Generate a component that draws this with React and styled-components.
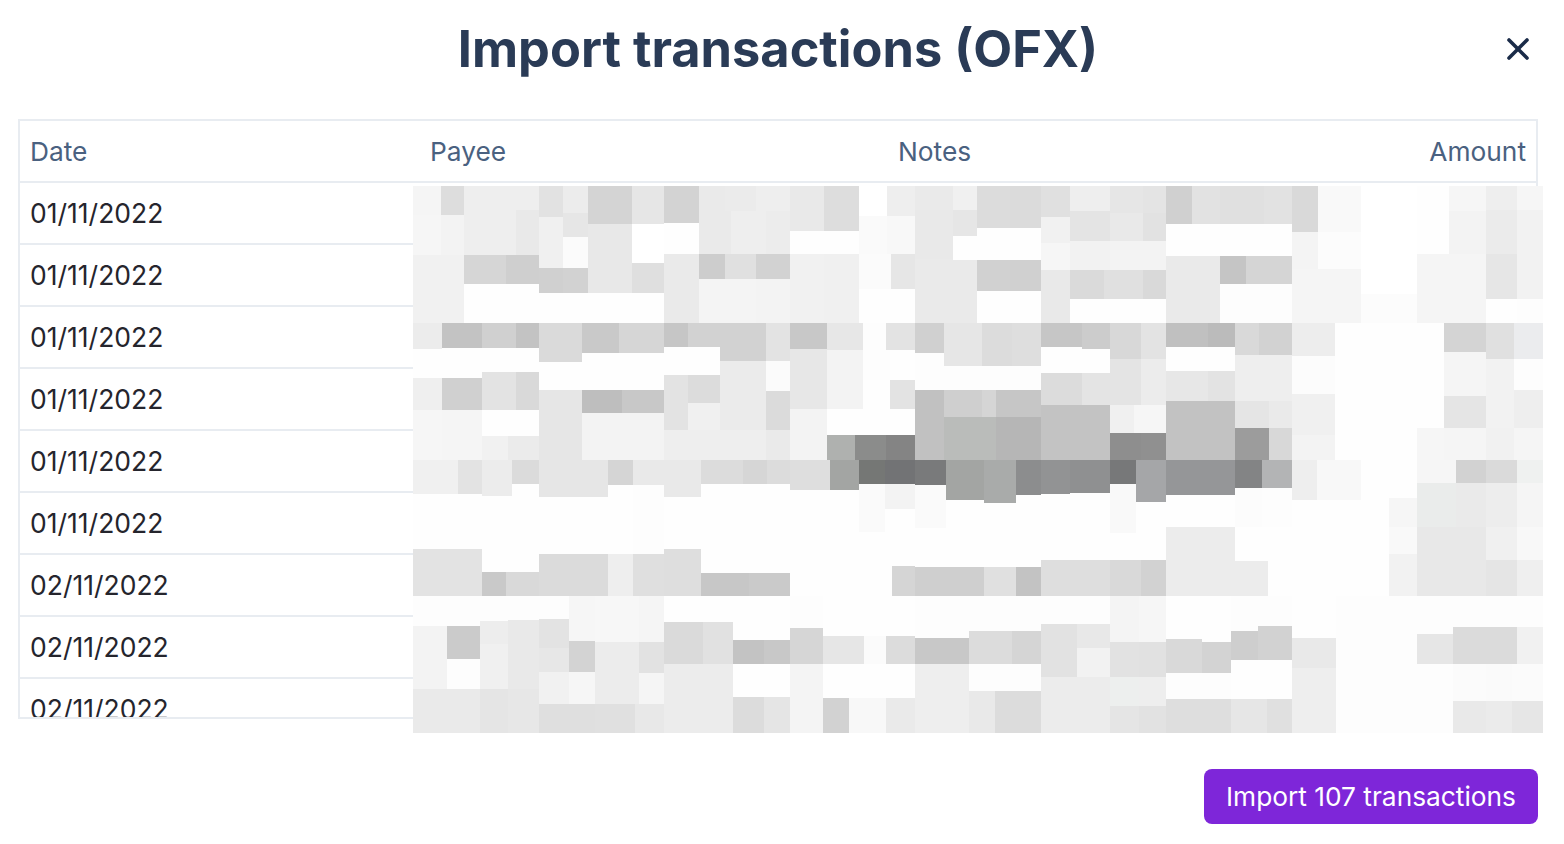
import React from 'react'
import styled, { createGlobalStyle } from 'styled-components'
import { X } from 'lucide-react'

const GlobalStyle = createGlobalStyle`
  html, body {
    margin: 0;
    background: #fff;
    font-family: Inter, "Noto Sans", sans-serif;
  }
`

const dates = [
  '01/11/2022', '01/11/2022', '01/11/2022', '01/11/2022', '01/11/2022',
  '01/11/2022', '02/11/2022', '02/11/2022', '02/11/2022',
]

// pixelated patch over payee, notes and amount: [right edge, [[bottom, grey], ...]]
const bands = [
  { base: 180, start: 18, columns: [
    [441, [[104, 'f5'], [225, 'f6'], [429, 'f1']]],
    [464, [[104, 'dd'], [225, 'f3'], [429, 'f1']]],
    [506, [[225, 'ee'], [312, 'd6'], [429, 'fe']]],
    [516, [[225, 'ee'], [312, 'cf'], [429, 'fe']]],
    [539, [[90, 'ee'], [225, 'e9'], [312, 'cf'], [429, 'fe']]],
    [563, [[110, 'e2'], [264, 'f0'], [339, 'd0'], [429, 'fe']]],
    [588, [[98, 'ec'], [170, 'e6'], [264, 'fb'], [339, 'd2'], [429, 'fe']]],
    [632, [[132, 'd4'], [339, 'e8'], [429, 'fe']]],
    [664, [[132, 'e6'], [249, 'ff'], [339, 'df'], [429, 'fe']]],
    [699, [[129, 'd3'], [222, 'fe'], [429, 'ea']]],
    [725, [[222, 'ea'], [297, 'cd'], [429, 'f4']]],
    [731, [[93, 'eb'], [222, 'ea'], [297, 'e0'], [429, 'f4']]],
    [756, [[93, 'eb'], [222, 'ee'], [297, 'e0'], [429, 'f4']]],
    [766, [[222, 'ee'], [297, 'd2'], [429, 'f3']]],
    [790, [[93, 'ee'], [222, 'ec'], [297, 'd2'], [429, 'f3']]],
    [824, [[153, 'e9'], [222, 'fe'], [429, 'f1']]],
    [859, [[153, 'dd'], [222, 'fe'], [429, 'f0']]],
    [887, [[108, 'ff'], [222, 'fa'], [327, 'fb'], [429, 'fe']]],
    [891, [[108, 'ee'], [222, 'f8'], [327, 'fb'], [429, 'fe']]],
    [915, [[108, 'ee'], [222, 'f8'], [327, 'e6'], [429, 'fe']]],
    [953, [[90, 'ea'], [237, 'e9'], [429, 'ea']]],
    [977, [[90, 'f0'], [168, 'e6'], [240, 'fe'], [429, 'ea']]],
    [1010, [[144, 'dc'], [240, 'fe'], [333, 'd1'], [429, 'fe']]],
    [1041, [[144, 'db'], [240, 'fe'], [333, 'd0'], [429, 'fe']]],
    [1070, [[111, 'e0'], [189, 'f1'], [270, 'f6'], [429, 'e9']]],
    [1104, [[93, 'ee'], [183, 'e4'], [270, 'f2'], [357, 'da'], [429, 'fe']]],
    [1110, [[93, 'ee'], [183, 'e4'], [270, 'f2'], [357, 'e0'], [429, 'fe']]],
    [1143, [[99, 'e6'], [183, 'e9'], [270, 'f3'], [357, 'e0'], [429, 'fe']]],
    [1166, [[99, 'e4'], [183, 'e2'], [270, 'f3'], [357, 'd9'], [429, 'fe']]],
    [1192, [[132, 'd0'], [228, 'fe'], [429, 'ea']]],
    [1220, [[132, 'e2'], [228, 'fe'], [429, 'ea']]],
    [1246, [[132, 'e0'], [228, 'fe'], [312, 'c5'], [429, 'fd']]],
    [1264, [[132, 'e0'], [228, 'fe'], [312, 'd5'], [429, 'fd']]],
    [1292, [[132, 'e2'], [228, 'fe'], [312, 'd5'], [429, 'fd']]],
    [1318, [[156, 'd9'], [267, 'f4'], [429, 'f5']]],
    [1361, [[156, 'f9'], [267, 'fc'], [429, 'f5']]],
    [1417, [[342, 'ff'], [429, 'fc']]],
    [1449, [[222, 'fe'], [429, 'f5']]],
    [1486, [[93, 'f6'], [222, 'f3'], [429, 'f5']]],
    [1517, [[90, 'ee'], [222, 'eb'], [357, 'e6'], [429, 'fe']]],
    [1543, [[90, 'f6'], [357, 'f2'], [429, 'fd']]],
  ] },
  { base: 180, start: 429, columns: [
    [442, [[507, 'ec'], [594, 'fe'], [690, 'ef'], [840, 'f6']]],
    [482, [[504, 'c3'], [594, 'fe'], [690, 'd0'], [840, 'f5']]],
    [508, [[504, 'd0'], [576, 'fe'], [690, 'e3'], [768, 'fe'], [840, 'f1']]],
    [516, [[504, 'd0'], [576, 'fe'], [690, 'e3'], [768, 'fe'], [840, 'eb']]],
    [539, [[504, 'c3'], [576, 'fe'], [690, 'd9'], [768, 'fe'], [840, 'eb']]],
    [582, [[546, 'da'], [630, 'fe'], [840, 'e6']]],
    [619, [[519, 'c9'], [630, 'fe'], [699, 'be'], [840, 'f3']]],
    [622, [[519, 'd6'], [630, 'fe'], [699, 'be'], [840, 'f3']]],
    [664, [[519, 'd6'], [630, 'fe'], [699, 'c8'], [840, 'f3']]],
    [688, [[501, 'c6'], [585, 'fe'], [750, 'e3'], [840, 'ee']]],
    [720, [[501, 'd2'], [585, 'fe'], [669, 'dc'], [750, 'f0'], [840, 'ee']]],
    [766, [[543, 'd2'], [750, 'eb'], [840, 'ee']]],
    [790, [[543, 'e3'], [633, 'fb'], [750, 'db'], [840, 'ea']]],
    [827, [[507, 'c8'], [687, 'e7'], [840, 'f3']]],
    [855, [[510, 'e7'], [687, 'f3'], [765, 'fe'], [840, 'afb1af']]],
    [863, [[510, 'e7'], [687, 'f3'], [765, 'fe'], [840, '8b8c8b']]],
    [886, [[600, 'fd'], [765, 'fe'], [840, '8b8c8b']]],
    [890, [[510, 'e3'], [600, 'fd'], [765, 'fe'], [840, '84']]],
    [915, [[510, 'e3'], [600, 'fe'], [687, 'e3'], [765, 'fe'], [840, '84']]],
    [944, [[519, 'd0'], [630, 'fd'], [840, 'c1']]],
    [982, [[558, 'e6'], [630, 'fd'], [711, 'cf'], [840, 'babcba']]],
    [996, [[558, 'dc'], [630, 'fd'], [711, 'd5'], [840, 'babcba']]],
    [1012, [[558, 'dc'], [630, 'fd'], [711, 'c6'], [840, 'b6']]],
    [1041, [[558, 'de'], [630, 'fd'], [711, 'c6'], [840, 'b6']]],
    [1082, [[501, 'c6'], [579, 'fe'], [675, 'dc'], [840, 'c3']]],
    [1110, [[507, 'cc'], [579, 'fe'], [675, 'e4'], [840, 'c3']]],
    [1134, [[537, 'd8'], [675, 'e4'], [759, 'f0'], [840, '8e']]],
    [1141, [[537, 'd8'], [675, 'e4'], [759, 'f6'], [840, '8e']]],
    [1166, [[537, 'e3'], [675, 'ec'], [759, 'f6'], [840, '90']]],
    [1208, [[501, 'c0'], [573, 'fe'], [663, 'e7'], [840, 'c2']]],
    [1235, [[501, 'bb'], [573, 'fe'], [663, 'e3'], [840, 'c2']]],
    [1259, [[525, 'd9'], [663, 'ee'], [744, 'e5'], [840, '9c']]],
    [1269, [[525, 'd2'], [663, 'ee'], [744, 'e5'], [840, '9c']]],
    [1292, [[525, 'd2'], [663, 'ee'], [744, 'ea'], [840, 'd8']]],
    [1335, [[528, 'ed'], [642, 'fc'], [765, 'f0'], [840, 'f3']]],
    [1417, [[840, 'fe']]],
    [1444, [[744, 'fe'], [840, 'f6']]],
    [1486, [[516, 'd4'], [648, 'f5'], [744, 'e5'], [840, 'f5']]],
    [1514, [[537, 'e0'], [744, 'f2'], [840, 'f1']]],
    [1543, [[537, 'ebecee'], [630, 'fd'], [744, 'ee'], [840, 'f5']]],
  ] },
  { base: 460, start: 0, columns: [
    [458, [[102, 'f0'], [267, 'fe'], [408, 'e3']]],
    [482, [[102, 'e3'], [267, 'fe'], [408, 'e3']]],
    [506, [[108, 'ec'], [336, 'fe'], [408, 'c9']]],
    [512, [[108, 'ec'], [336, 'fe'], [408, 'd9']]],
    [539, [[72, 'db'], [336, 'fe'], [408, 'd9']]],
    [608, [[111, 'e6'], [282, 'fe'], [408, 'db']]],
    [633, [[75, 'd5'], [282, 'fe'], [408, 'ee']]],
    [664, [[75, 'e9'], [282, 'fd'], [408, 'df']]],
    [701, [[111, 'e9'], [267, 'fe'], [408, 'de']]],
    [743, [[72, 'dc'], [339, 'fe'], [408, 'c7']]],
    [749, [[72, 'd6'], [339, 'fe'], [408, 'c7']]],
    [767, [[72, 'd6'], [339, 'fe'], [408, 'ca']]],
    [790, [[72, 'dc'], [339, 'fe'], [408, 'ca']]],
    [830, [[90, 'de'], [408, 'fe']]],
    [859, [[90, 'a3a5a3'], [408, 'fe']]],
    [885, [[72, '757775'], [216, 'fa'], [408, 'fe']]],
    [892, [[72, '727375'], [147, 'f3'], [408, 'fe']]],
    [915, [[72, '727375'], [147, 'f3'], [318, 'fe'], [408, 'd5']]],
    [946, [[75, '797a7b'], [204, 'fa'], [321, 'fe'], [408, 'cf']]],
    [984, [[120, 'a3a5a3'], [321, 'fe'], [408, 'cf']]],
    [1016, [[129, 'a9abaa'], [321, 'fe'], [408, 'e0']]],
    [1041, [[105, '8c8d8e'], [321, 'fe'], [408, 'c3']]],
    [1070, [[102, '929394'], [300, 'fe'], [408, 'de']]],
    [1110, [[99, '8f9091'], [300, 'fe'], [408, 'de']]],
    [1136, [[72, '777879'], [219, 'f9'], [300, 'fe'], [408, 'd9']]],
    [1141, [[126, 'a5a6a8'], [300, 'fe'], [408, 'd9']]],
    [1166, [[126, 'a5a6a8'], [300, 'fe'], [408, 'd2']]],
    [1235, [[105, '959698'], [201, 'fe'], [408, 'ec']]],
    [1262, [[84, '838485'], [201, 'fc'], [303, 'fe'], [408, 'ec']]],
    [1268, [[84, 'b3b4b5'], [201, 'fd'], [303, 'fe'], [408, 'ec']]],
    [1292, [[84, 'b3b4b5'], [201, 'fd'], [408, 'fe']]],
    [1317, [[120, 'ee'], [408, 'fe']]],
    [1361, [[120, 'f8'], [408, 'fe']]],
    [1389, [[408, 'fe']]],
    [1417, [[114, 'fe'], [201, 'f6'], [282, 'f9'], [408, 'f2']]],
    [1456, [[69, 'f6'], [201, 'eaeceb'], [408, 'e8']]],
    [1486, [[69, 'd2'], [201, 'ea'], [408, 'e8']]],
    [1517, [[69, 'da'], [201, 'ed'], [300, 'f0'], [408, 'e5']]],
    [1543, [[69, 'eff1f0'], [201, 'f5'], [300, 'f8'], [408, 'ef']]],
  ] },
  { base: 460, start: 408, columns: [
    [447, [[498, 'fd'], [687, 'f3'], [819, 'ea']]],
    [480, [[498, 'fd'], [597, 'cb'], [687, 'fd'], [819, 'ea']]],
    [508, [[483, 'fd'], [552, 'ed'], [687, 'f0'], [819, 'e5']]],
    [539, [[480, 'fd'], [687, 'e9'], [819, 'e7']]],
    [569, [[477, 'fd'], [564, 'e3'], [636, 'e7'], [732, 'f1'], [819, 'df']]],
    [595, [[543, 'f6'], [636, 'd3'], [732, 'f6'], [819, 'df']]],
    [635, [[546, 'f7'], [732, 'ec'], [819, 'e0']]],
    [639, [[546, 'f7'], [732, 'ec'], [819, 'e8']]],
    [664, [[546, 'f5'], [639, 'e2'], [732, 'f5'], [819, 'e8']]],
    [703, [[486, 'fe'], [612, 'da'], [819, 'ec']]],
    [733, [[486, 'fe'], [612, 'e1'], [819, 'ec']]],
    [764, [[540, 'fe'], [612, 'c3'], [711, 'fe'], [819, 'dc']]],
    [790, [[540, 'fe'], [612, 'c8'], [711, 'fe'], [819, 'e5']]],
    [823, [[504, 'fd'], [612, 'd6'], [819, 'f4']]],
    [849, [[528, 'fe'], [612, 'e6'], [714, 'fe'], [819, 'd2']]],
    [864, [[528, 'fe'], [612, 'e6'], [714, 'fe'], [819, 'f8']]],
    [886, [[528, 'fe'], [612, 'fb'], [714, 'fe'], [819, 'f8']]],
    [915, [[528, 'fe'], [612, 'dc'], [714, 'fe'], [819, 'ea']]],
    [969, [[534, 'fd'], [612, 'c8'], [819, 'ee']]],
    [995, [[513, 'fd'], [612, 'dc'], [693, 'fd'], [819, 'e9']]],
    [1012, [[513, 'fd'], [612, 'dc'], [693, 'fd'], [819, 'dc']]],
    [1041, [[513, 'fd'], [612, 'd5'], [693, 'fd'], [819, 'dc']]],
    [1077, [[492, 'fd'], [651, 'e2'], [819, 'ec']]],
    [1110, [[492, 'fd'], [564, 'e8'], [651, 'f2'], [819, 'ec']]],
    [1139, [[546, 'f4'], [651, 'e2'], [738, 'edefee'], [819, 'e5']]],
    [1166, [[546, 'f6'], [651, 'e1'], [738, 'ee'], [819, 'e2']]],
    [1202, [[537, 'fe'], [639, 'd9'], [717, 'fd'], [819, 'de']]],
    [1231, [[546, 'fe'], [639, 'd3'], [717, 'fd'], [819, 'de']]],
    [1258, [[513, 'fd'], [600, 'ce'], [717, 'fe'], [819, 'e6']]],
    [1267, [[498, 'fd'], [600, 'd2'], [717, 'fe'], [819, 'e6']]],
    [1292, [[498, 'fd'], [600, 'd2'], [717, 'fe'], [819, 'e0']]],
    [1336, [[534, 'fe'], [624, 'e9'], [819, 'ee']]],
    [1417, [[819, 'fd']]],
    [1453, [[522, 'fd'], [612, 'e6'], [819, 'fd']]],
    [1486, [[501, 'fd'], [612, 'db'], [723, 'fb'], [819, 'e9']]],
    [1512, [[501, 'fd'], [612, 'db'], [723, 'fa'], [819, 'eb']]],
    [1517, [[501, 'fd'], [612, 'db'], [723, 'fb'], [819, 'e6']]],
    [1543, [[501, 'fd'], [612, 'f1'], [723, 'fb'], [819, 'e6']]],
  ] },
]

const toFill = (c) => (c.length === 2 ? `#${c}${c}${c}` : `#${c}`)

const blocks = []
bands.forEach(({ base, start, columns }) => {
  let left = 413
  columns.forEach(([right, segments]) => {
    let top = start
    segments.forEach(([bottom, colour]) => {
      blocks.push({
        x: left,
        y: base + top / 3,
        width: right - left,
        height: (bottom - top) / 3,
        fill: toFill(colour),
      })
      top = bottom
    })
    left = right
  })
})

const Modal = styled.div`
  position: relative;
  box-sizing: border-box;
  width: 1564px;
  height: 844px;
  padding: 0 26px 0 18px;
  overflow: hidden;
  background: #fff;
`

const Header = styled.header`
  height: 119px;
  display: flex;
  justify-content: center;
`

const Title = styled.h1`
  margin: 20px 0 0;
  font-size: 50.5px;
  line-height: 58px;
  font-weight: 700;
  color: #2a3b56;
`

const CloseButton = styled.button`
  position: absolute;
  top: 31px;
  right: 28px;
  width: 36px;
  height: 36px;
  padding: 0;
  border: 0;
  background: none;
  color: #1a2b48;
`

const Table = styled.div`
  box-sizing: border-box;
  height: 600px;
  border: 2px solid #e8ecf1;
  overflow: hidden;
`

const Row = styled.div`
  box-sizing: border-box;
  height: 62px;
  display: grid;
  grid-template-columns: 400px 468px 1fr auto;
  align-items: center;
  padding: 0 10px;
  border-bottom: 2px solid #e8ecf1;
`

const HeadCell = styled.div`
  font-size: 26.3px;
  color: #4a6180;
  text-align: ${({ $right }) => ($right ? 'right' : 'left')};
`

const DateCell = styled.div`
  font-size: 26.5px;
  color: #25252d;
`

const Redaction = styled.svg`
  position: absolute;
  left: 413px;
  top: 186px;
  display: block;
`

const Footer = styled.footer`
  display: flex;
  justify-content: flex-end;
  margin-top: 50px;
`

const ImportButton = styled.button`
  height: 55px;
  padding: 0 22px;
  border: 0;
  border-radius: 8px;
  background: #7e26d9;
  color: #fff;
  font-family: inherit;
  font-size: 26.3px;
  font-weight: 400;
`

const App = () => (
  <>
    <GlobalStyle />
    <Modal>
      <Header>
        <Title>Import transactions (OFX)</Title>
        <CloseButton aria-label="Close">
          <X size={36} strokeWidth={2.4} />
        </CloseButton>
      </Header>

      <Table>
        <Row>
          <HeadCell>Date</HeadCell>
          <HeadCell>Payee</HeadCell>
          <HeadCell>Notes</HeadCell>
          <HeadCell $right>Amount</HeadCell>
        </Row>
        {dates.map((date, i) => (
          <Row key={i}>
            <DateCell>{date}</DateCell>
          </Row>
        ))}
      </Table>

      <Redaction width="1130" height="547" viewBox="413 186 1130 547" shapeRendering="crispEdges">
        {blocks.map((block, i) => (
          <rect key={i} {...block} />
        ))}
      </Redaction>

      <Footer>
        <ImportButton>Import 107 transactions</ImportButton>
      </Footer>
    </Modal>
  </>
)

export default App
